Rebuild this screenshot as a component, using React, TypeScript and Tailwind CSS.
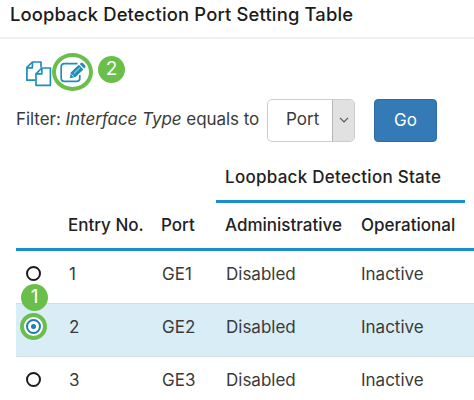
// src/App.tsx
const rows = [
  { id: 1, port: 'GE1', admin: 'Disabled', oper: 'Inactive' },
  { id: 2, port: 'GE2', admin: 'Disabled', oper: 'Inactive' },
  { id: 3, port: 'GE3', admin: 'Disabled', oper: 'Inactive' },
];

const selectedId = 2;

function CopyIcon() {
  return (
    <svg className="mt-[3px]" width="28" height="28" viewBox="0 0 28 28" fill="none" stroke="#1f8fb8" strokeWidth="1.7" strokeLinejoin="round">
      <path d="M10.5 20.2H1.9V7.4L7.4 2H16v5.5" />
      <path d="M7.4 2v5.8H1.9" />
      <path d="M16.8 8H25.4v17.3H11V13.8z" />
      <path d="M16.8 8v5.8H11" />
    </svg>
  );
}

function EditIcon() {
  return (
    <svg className="shrink-0" width="28" height="24" viewBox="0 0 28 24" fill="none" stroke="#1f8fb8" strokeWidth="1.7">
      <path d="M18.5 3.6H5.4Q2.2 3.6 2.2 6.8v11.4q0 3.2 3.2 3.2h12.2q3.2 0 3.2-3.2V15" />
      <path d="M10.8 18.2l1.2-6 7.8-7.5 4.6 4.8-7.8 7.4z" fill="#1f8fb8" stroke="none" />
      <path d="M20.7 3.9l1.2-1q1-.8 1.9.1l2.4 2.5q.9 1 0 1.9l-1 1.1z" fill="#1f8fb8" stroke="none" />
      <path d="M14.8 13.6l6-5.8" stroke="#fff" strokeWidth="0.8" />
      <path d="M12.6 14.4l2.2 2.2" stroke="#fff" strokeWidth="0.9" />
    </svg>
  );
}

function Radio({ checked }: { checked: boolean }) {
  if (!checked) {
    return <span className="block w-[15px] h-[15px] ml-[10px] rounded-full border-[2.5px] border-[#1c1c1c] bg-white" />;
  }
  return (
    <span className="relative flex items-center justify-center w-[27px] h-[27px] ml-1 rounded-full border-4 border-[#6abf4b] bg-white">
      <span className="flex items-center justify-center w-[15px] h-[15px] rounded-full border-2 border-[#1c7cb5]">
        <span className="w-[5px] h-[5px] rounded-full bg-[#1c7cb5]" />
      </span>
      <span className="absolute -top-[33px] -left-[3px] flex items-center justify-center w-[27px] h-[27px] rounded-full bg-[#6abf4b] text-white text-[19px]">
        1
      </span>
    </span>
  );
}

export default function App() {
  return (
    <div className="w-[474px] h-[400px] overflow-hidden bg-white font-['Inter',sans-serif] text-[17px] text-[#3a3a3a]">
      <h1 className="h-[39px] pl-[10px] border-b-2 border-[#f1f1f1] text-[18.4px] leading-[28px] tracking-[0.16px] font-medium text-[#1c1c1c] whitespace-nowrap">
        Loopback Detection Port Setting Table
      </h1>

      <div className="flex items-center h-[59px] pl-[25px] pt-[7px]">
        <CopyIcon />
        <div className="flex items-center justify-center w-[41px] h-[38px] -ml-px rounded-[50%] border-4 border-[#6abf4b]">
          <EditIcon />
        </div>
        <span className="flex items-center justify-center w-[27px] h-[27px] ml-[5px] -mt-[5px] rounded-full bg-[#6abf4b] text-white text-[19px]">
          2
        </span>
      </div>

      <div className="flex items-center h-[44px] pl-4 whitespace-nowrap">
        <span className="w-[251px] tracking-[-0.05px]">
          Filter: <em>Interface Type</em> equals to
        </span>
        <div className="flex w-[88px] h-[43px] rounded-[5px] border border-[#ccc] overflow-hidden">
          <span className="flex-1 flex items-center pl-[18px]">Port</span>
          <span className="flex items-center justify-center w-[22px] border-l border-[#b5b5b5] bg-[#e1e1e1]">
            <svg width="10" height="6" viewBox="0 0 10 6" fill="none" stroke="#555" strokeWidth="1.2">
              <path d="M1 .8l4 4 4-4" />
            </svg>
          </span>
        </div>
        <button className="w-[63px] h-[43px] ml-[19px] pt-px rounded-[4px] border border-[#2e6da4] bg-[#337ab7] text-white">Go</button>
      </div>

      <div className="pl-4 whitespace-nowrap">
        <div className="ml-[200px] w-[249px] h-[61px] pl-[9px] pt-[22px] border-b-3 border-[#1a8fc9] leading-[26px] tracking-[0.27px] font-medium text-[#222]">
          Loopback Detection State
        </div>
        <div className="grid grid-cols-[52px_93px_64px_136px_1fr] items-center h-[48px] pt-px border-b-3 border-[#1a8fc9] font-medium text-[#222]">
          <span />
          <span>Entry No.</span>
          <span>Port</span>
          <span>Administrative</span>
          <span>Operational</span>
        </div>
        {rows.map((r) => (
          <div
            key={r.id}
            className={`grid grid-cols-[53px_93px_64px_135px_1fr] items-center h-[53px] pb-[7px] border-b border-[#d3dfe8] ${
              r.id === selectedId ? 'bg-[#d9edf7]' : 'bg-white'
            }`}
          >
            <Radio checked={r.id === selectedId} />
            <span className="pt-[2px]">{r.id}</span>
            <span className="pt-[2px]">{r.port}</span>
            <span className="pt-[2px]">{r.admin}</span>
            <span className="pt-[2px]">{r.oper}</span>
          </div>
        ))}
      </div>
    </div>
  );
}
